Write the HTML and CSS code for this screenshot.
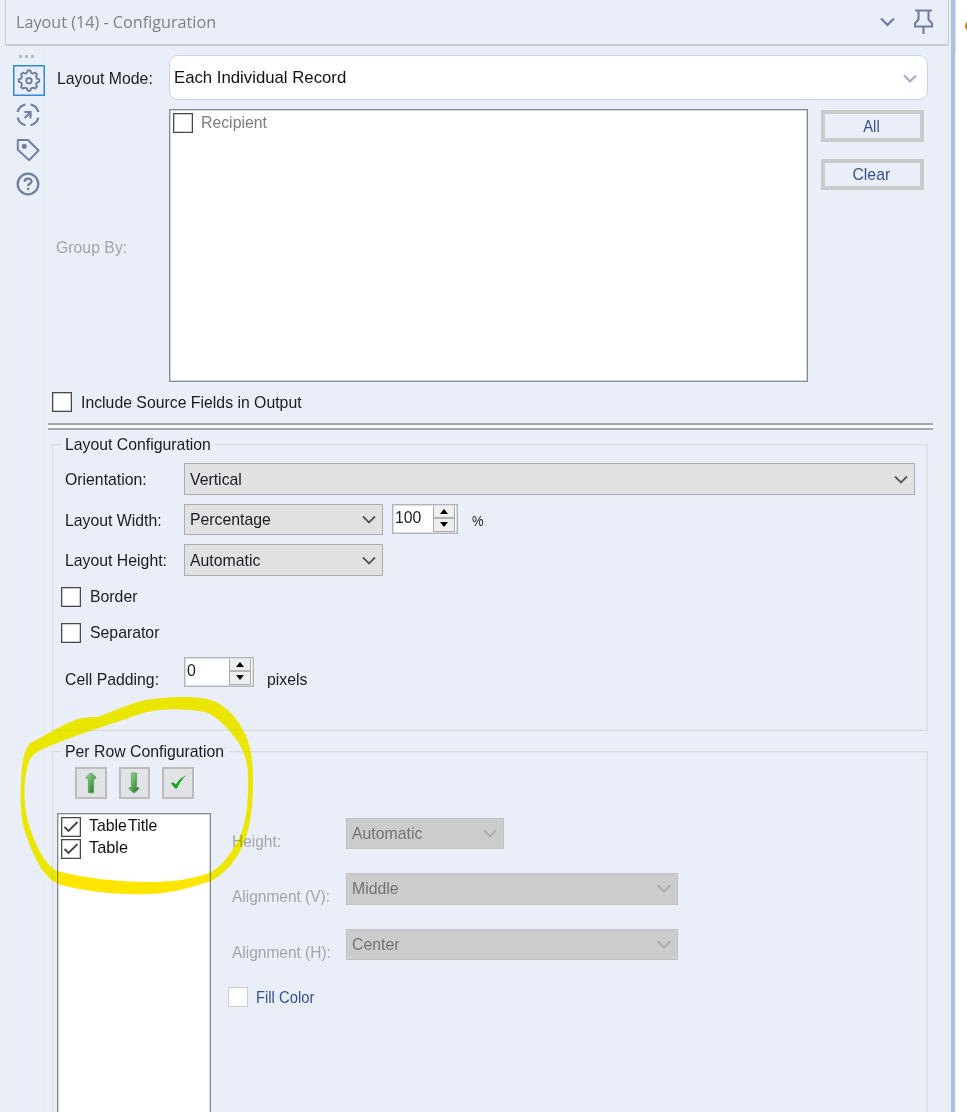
FILE: index.html
```
<!DOCTYPE html>
<html lang="en">
<head>
<meta charset="utf-8">
<title>Layout (14) - Configuration</title>
<link rel="stylesheet" href="styles.css">
</head>
<body>
<div class="screen">
  <main class="dock">
    <header class="titlebar">
      <h1 class="title">Layout (14) - Configuration</h1>
      <svg class="title-icons" width="60" height="30" viewBox="0 0 60 30" fill="none" stroke="#6f7f9f" stroke-width="2">
        <path d="M2 11.500l6.500 6.300 6.500-6.300" stroke-width="2.300"/>
        <path d="M36 3.500h17M39.500 4v8.500l-3.500 4v3h17v-3l-3.500-4V4M44.500 20v7" stroke-width="2.100"/>
      </svg>
    </header>
    <div class="body">
      <nav class="rail">
        <svg class="dots" width="20" height="4" viewBox="0 0 20 4" fill="#b9b9b9"><path d="M1 0h3v3H1zM7 0h3v3H7zM13 0h3v3h-3z"/></svg>
        <div class="tool active">
          <svg width="24" height="24" viewBox="0 0 24 24" fill="none" stroke="#6f7f9f" stroke-width="1.900" stroke-linejoin="round"><path d="M9.900 3.800 10.700 1.500h2.600l.8 2.300 1.900.8 2.200-1 1.800 1.800-1 2.200.8 1.900 2.400.8v2.500l-2.400.9-.8 1.900 1 2.200-1.800 1.800-2.200-1-1.900.8-.8 2.400h-2.600l-.8-2.400-1.900-.8-2.200 1L4 17.800l1-2.200-.8-1.900-2.400-.9v-2.500l2.400-.8L5 7.600l-1-2.200 1.800-1.800 2.200 1z"/><circle cx="12" cy="11.700" r="2.700"/></svg>
        </div>
        <div class="tool">
          <svg width="26" height="26" viewBox="0 0 26 26" fill="none" stroke="#6f7f9f" stroke-width="2.200"><path d="M10.500 2.500A10.600 10.600 0 0 0 2.600 10M15.500 2.500A10.600 10.600 0 0 1 23.400 10M2.600 15.500a10.600 10.600 0 0 0 7.900 7.700M23.400 15.500a10.600 10.600 0 0 1-7.900 7.700M9.700 16l5.500-5.500M9.500 10h6v6.300"/></svg>
        </div>
        <div class="tool">
          <svg width="26" height="26" viewBox="0 0 26 26" fill="none" stroke="#6f7f9f" stroke-width="1.900" stroke-linejoin="round"><path d="M2.800 3h10.200l10.500 10.500-9.300 9.700L2.800 12.800z"/><circle cx="9.300" cy="9.300" r="1.600" fill="#6f7f9f"/></svg>
        </div>
        <div class="tool">
          <svg width="26" height="26" viewBox="0 0 26 26" fill="none" stroke="#6f7f9f" stroke-width="2.300"><circle cx="13" cy="13" r="10.300"/><path d="M9.700 10.700c0-4 6.800-4 6.800-.3 0 2.400-3.400 2.400-3.400 4.600"/><path d="M13.100 16.700v2.300"/></svg>
        </div>
      </nav>
      <section class="form">
        <div class="mode">
          <span class="t mode-label">Layout Mode:</span>
          <div class="mode-select"><span class="t wide">Each Individual Record</span>
            <svg width="16" height="10" viewBox="0 0 16 10" fill="none" stroke="#a0afca" stroke-width="2.200"><path d="M2 1.500l6 6 6-6"/></svg>
          </div>
        </div>
        <div class="group">
          <span class="t group-label muted">Group By:</span>
          <div class="group-list"><i class="check"></i><span class="t">Recipient</span></div>
          <div class="group-actions"><button class="btn"><span class="t narrow">All</span></button><button class="btn"><span class="t">Clear</span></button></div>
        </div>
        <div class="include"><i class="check"></i><span class="t">Include Source Fields in Output</span></div>
        <div class="splitter"></div>

        <section class="box layout-box">
          <div class="legend"><span class="t">Layout Configuration</span></div>
          <div class="row"><span class="t label">Orientation:</span>
            <div class="select full"><span class="t">Vertical</span><svg width="14" height="9" viewBox="0 0 14 9"><path d="M1 1.500l6 6 6-6"/></svg></div>
          </div>
          <div class="row"><span class="t label">Layout Width:</span>
            <div class="select half"><span class="t">Percentage</span><svg width="14" height="9" viewBox="0 0 14 9"><path d="M1 1.500l6 6 6-6"/></svg></div>
            <div class="spin"><span class="t">100</span><div class="arrows"><b class="up"></b><b class="down"></b></div></div>
            <span class="t unit percent">%</span>
          </div>
          <div class="row"><span class="t label">Layout Height:</span>
            <div class="select half"><span class="t">Automatic</span><svg width="14" height="9" viewBox="0 0 14 9"><path d="M1 1.500l6 6 6-6"/></svg></div>
          </div>
          <div class="option"><i class="check"></i><span class="t">Border</span></div>
          <div class="option"><i class="check"></i><span class="t">Separator</span></div>
          <div class="row padding-row"><span class="t label">Cell Padding:</span>
            <div class="spin large"><span class="t">0</span><div class="arrows"><b class="up"></b><b class="down"></b></div></div>
            <span class="t unit">pixels</span>
          </div>
        </section>

        <section class="box row-box">
          <div class="legend"><span class="t">Per Row Configuration</span></div>
          <div class="icon-buttons">
            <button><svg width="12" height="22" viewBox="0 0 12 22"><defs><linearGradient id="g" x2="1" y2="1"><stop stop-color="#a5dda0"/><stop offset="1" stop-color="#176f20"/></linearGradient></defs><path d="M6 .8 10.800 5v1.500H8.600v14.300H3.400V6.500H1.200V5z" fill="url(#g)" stroke="#55a557" stroke-width=".8"/></svg></button>
            <button><svg width="12" height="22" viewBox="0 0 12 22"><path d="M3.400 1h5.200v14.500h2.200V17L6 21.200 1.200 17v-1.500h2.200z" fill="url(#g)" stroke="#55a557" stroke-width=".8"/></svg></button>
            <button><svg width="18" height="18" viewBox="0 0 18 18"><path d="M2 9.500l2-1.300 2.700 2.400c2.600-4.300 6-7.400 10.800-9.700-4.500 4-7.300 8.600-9.600 13.600H6.200z" fill="#13a51b"/></svg></button>
          </div>
          <div class="row-config">
            <div class="row-list">
              <div class="item"><i class="check"><svg width="16" height="16" viewBox="0 0 16 16"><path d="M1.500 8l4 4 9-9"/></svg></i><span class="t tight">Table Title</span></div>
              <div class="item"><i class="check"><svg width="16" height="16" viewBox="0 0 16 16"><path d="M1.500 8l4 4 9-9"/></svg></i><span class="t table">Table</span></div>
            </div>
            <div class="row-props">
              <div class="prop"><span class="t label muted">Height:</span><div class="select disabled small"><span class="t">Automatic</span><svg width="14" height="9" viewBox="0 0 14 9"><path d="M1 1.500l6 6 6-6"/></svg></div></div>
              <div class="prop"><span class="t label muted">Alignment (V):</span><div class="select disabled"><span class="t">Middle</span><svg width="14" height="9" viewBox="0 0 14 9"><path d="M1 1.500l6 6 6-6"/></svg></div></div>
              <div class="prop"><span class="t label muted">Alignment (H):</span><div class="select disabled"><span class="t">Center</span><svg width="14" height="9" viewBox="0 0 14 9"><path d="M1 1.500l6 6 6-6"/></svg></div></div>
              <div class="fill"><i class="check off"></i><span class="t narrow">Fill Color</span></div>
            </div>
          </div>
        </section>
      </section>
    </div>
  </main>
  <div class="dock-edge"></div>
  <aside class="canvas"><div class="canvas-tab"><i></i></div></aside>
  <svg class="marker" width="260" height="220" viewBox="0 690 260 220">
    <path fill="#ffe600" fill-rule="evenodd" d="M30 743C45 736 60 725 78 719C86 717 92 717 98 717C117 710 134 701 153 699C170 697 190 696 207 699C225 703 237 718 244 732C251 745 253 762 253 780C253 803 251 824 245 840C238 858 228 872 211 881C190 888 168 894 147 894C117 895 86 892 58 884C42 876 34 856 27 838C20 820 20 800 21 780C22 765 23 752 30 743ZM30 759C36 750 48 747 60 742C87 731 112 724 134 716C157 708 180 708 205 712C216 716 226 726 235 738C245 750 249 766 248 784C248 806 246 825 238 841C230 854 222 867 209 873C189 880 170 882 147 882C116 882 86 878 57 871C44 864 35 844 29 825C24 810 24 792 25 780C26 773 27 766 30 759Z"/>
  </svg>
</div>
</body>
</html>
```
FILE: styles.css
```
* { box-sizing: border-box; }
body { margin: 0; background: #fff; font: 17px/20px "Liberation Sans", Arial, sans-serif; color: #1b1b22; }
.screen { position: relative; display: flex; width: 967px; height: 1112px; overflow: hidden; isolation: isolate; }
.dock { width: 951px; padding-left: 5px; background: #eaeef9; }
.dock-edge { width: 4px; background: #b0c0e2; }
.canvas { flex: 1; background: #fff; }
.canvas-tab { width: 12px; height: 53px; padding: 21px 0 0 9px; border-left: 1px solid #ddd; overflow: hidden; }
.canvas-tab i { display: block; width: 9px; height: 10px; border-radius: 50%; background: #c98422; }

.titlebar { display: flex; justify-content: space-between; width: 944px; height: 46px; padding: 8px 9px 0 10px; border: solid #cdcdd0; border-width: 0 1px 2px 1px; }
.title { margin: 4px 0 0; font: 16.200px/20px "Open Sans", "Noto Sans", sans-serif; color: #808080; white-space: nowrap; }
.title-icons { margin-top: -1px; }
.body { display: flex; height: 1066px; }
.rail { width: 43px; border: solid #f0f0f0; border-width: 0 1px; padding: 9px 0 0 7px; }
.dots { display: block; margin: 0 0 6px 5px; }
.tool { display: grid; place-items: center; width: 31px; height: 30px; margin-bottom: 4.500px; }
.tool svg { margin-left: -1px; }
.tool.active { width: 32px; height: 31px; margin-bottom: 4px; border: 1px solid #2b8be0; box-shadow: inset 0 0 0 .5px #2b8be0; }
.form { width: 890px; }

.t { display: inline-block; flex: none; white-space: nowrap; transform: scaleX(.93); transform-origin: 0 50%; }
.t.wide { transform: scaleX(.985); color: #111; }
.t.narrow { transform: scaleX(.87); }
.tight { word-spacing: -3px; }
.t.table { transform: scaleX(.96); }
.muted { color: #a4a4aa; }
.check { flex: none; display: grid; place-items: center; width: 20px; height: 20px; border: 1.500px solid #484848; background: #fff; box-shadow: inset 0 0 0 .5px #999; }
.check svg { fill: none; stroke: #444; stroke-width: 1.800; }
.check.off { border-color: #ccc; box-shadow: none; }

.mode { display: flex; padding: 9px 0 0 9px; height: 63px; }
.mode-label { width: 112px; margin-top: 14px; }
.mode-select { display: flex; justify-content: space-between; width: 759px; height: 45px; padding: 12px 9px 0 4px; border: 1px solid #c6d2e9; border-radius: 9px; background: #fff; }
.mode-select svg { margin-top: 6px; }
.group { display: flex; height: 273px; }
.group-label { width: 113px; margin: 129px 0 0 8px; }
.group-list { display: flex; width: 639px; padding: 3px 3px; border: 1px solid #858b95; box-shadow: inset 0 0 0 .5px #a8adb5; gap: 8px; background: #fff; color: #7d7d7d; }
.group-actions { display: flex; flex-direction: column; gap: 17px; margin: 1px 0 0 13px; }
.btn { width: 103px; height: 31.500px; padding: 2px 0 0; border: 4px solid #cacaca; background: #eaeef9; color: #35508f; font: inherit; }
.btn .t { transform-origin: 50% 50%; margin-left: -3px; }
.include { display: flex; gap: 9px; height: 41px; padding: 10px 0 0 4px; }
.include .t { margin-top: 1px; }
.splitter { width: 885px; height: 7px; border: solid #a6a6a8; border-width: 2px 0; background: #fafafa; }

.box { width: 876px; margin-left: 4px; border: 1px solid #dcdddf; box-shadow: inset 0 0 0 .5px #dedfe1; }
.layout-box { height: 287px; margin-top: 14px; }
.legend { display: block; width: 154px; height: 20px; margin: -10px 0 0 8px; padding-left: 4px; background: #eaeef9; }
.row { display: flex; height: 40.500px; padding-left: 12px; }
.layout-box .legend + .row { margin-top: 8px; }
.label { width: 119px; margin-top: 7px; }
.select { display: flex; justify-content: space-between; height: 31.500px; padding: 5.500px 6px 0 5px; border: 1.500px solid #adadad; background: #e1e1e1; }
.select svg { margin-top: 5px; fill: none; stroke: #555; stroke-width: 1.800; }
.full { width: 731px; }
.half { width: 199px; }
.spin { display: flex; justify-content: space-between; width: 66px; height: 30px; margin-left: 9px; padding: 1px 2px 2px 2px; border: 1px solid #b0b3b8; box-shadow: inset 0 0 0 .5px #b8bbc0; background: #fff; }
.spin.large { width: 70px; margin-left: 0; }
.spin .t { margin-top: 2px; }
.arrows { display: flex; flex-direction: column; width: 22px; height: 26px; border: 1px solid #aaa; border-top: 0; background: #eee; }
.arrows b { flex: 1; display: grid; place-items: center; }
.arrows b + b { border-top: 2px solid #b5b5b5; }
.arrows b::after { content: ""; border: 4px solid transparent; }
.arrows .up::after { border-top: 0; border-bottom: 5px solid #000; }
.arrows .down::after { border-bottom: 0; border-top: 5px solid #000; }
.unit { margin: 7px 0 0 13px; }
.percent { font-size: 14px; margin-left: 14px; }
.option { display: flex; gap: 9px; height: 36px; padding: 2px 0 0 8px; }
.padding-row .label, .padding-row .unit { margin-top: 13px; }

.row-box { height: 400px; margin-top: 20px; }
.row-box .legend { width: 168px; }
.icon-buttons { display: flex; gap: 12px; padding: 5px 0 0 22px; }
.icon-buttons button { display: grid; place-items: center; width: 31.500px; height: 31.500px; padding: 0; border: 2px solid #bcbcbc; background: #e2e3e6; }
.row-config { display: flex; padding: 14px 0 0 4px; }
.row-list { width: 154px; height: 340px; padding: 3px 0 0 3px; border: 1px solid #858b95; box-shadow: inset 0 0 0 .5px #a8adb5; background: #fff; color: #111; }
.item { display: flex; gap: 8px; height: 22px; }
.item .t { margin-top: -1px; }
.row-props { padding: 5px 0 0 17px; }
.prop { display: flex; height: 55.500px; padding-left: 4px; }
.prop .label { width: 114px; margin-top: 14px; transform: scaleX(.91); }
.prop .select { padding-top: 5px; }
.disabled { width: 331.500px; background: #ccc; border-color: #c2c2c2; color: #737373; }
.disabled svg { stroke: #aaa; }
.small { width: 157.500px; }
.fill { display: flex; gap: 8px; padding-top: 3px; color: #35508f; }
.fill .t { margin-top: 1px; }
.marker { position: absolute; left: 0; top: 690px; mix-blend-mode: darken; }
```
